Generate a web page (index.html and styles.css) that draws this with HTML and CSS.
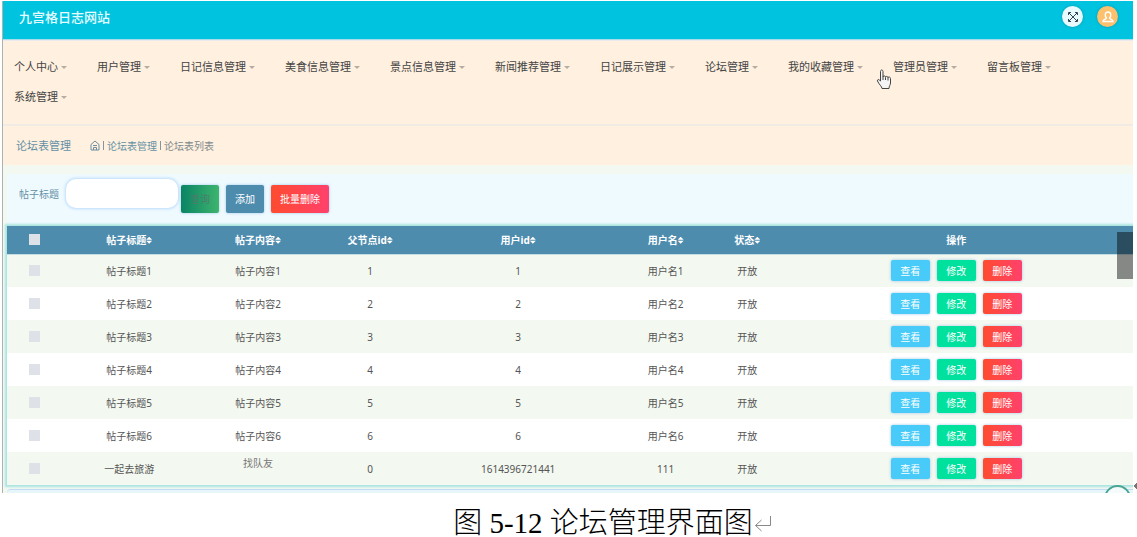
FILE: index.html
```html
<!DOCTYPE html>
<html lang="zh-CN">
<head>
    <meta charset="utf-8">
    <title>九宫格日志网站</title>
    <link rel="stylesheet" href="styles.css">
</head>
<body>
<figure class="figure">
<div class="screen">
    <header class="topbar">
        <h1>九宫格日志网站</h1>
        <div class="tools">
            <button class="round full" type="button" aria-label="全屏">
                <svg width="12" height="12" viewBox="0 0 12 12" fill="none" stroke="#345" stroke-width="1">
                    <path d="M2 2l8 8M10 2l-8 8M1.500 4V1.500H4M8 1.500h2.500V4M10.500 8v2.500H8M4 10.500H1.500V8"/>
                </svg>
            </button>
            <button class="round user" type="button" aria-label="用户">
                <svg width="14" height="14" viewBox="0 0 14 14" fill="none" stroke="#fff" stroke-width="1.400">
                    <path d="M5.500 8C3.500 6 3.800 2 7 2s3.500 4 1.500 6c.3 1.200 3.500 1 3.500 3.500H2C2 9 5.200 9.200 5.500 8z"/>
                </svg>
            </button>
        </div>
    </header>
    <nav class="menu">
        <a href="#">个人中心</a>
        <a href="#">用户管理</a>
        <a href="#">日记信息管理</a>
        <a href="#">美食信息管理</a>
        <a href="#">景点信息管理</a>
        <a href="#">新闻推荐管理</a>
        <a href="#">日记展示管理</a>
        <a href="#">论坛管理</a>
        <a href="#">我的收藏管理</a>
        <a href="#">管理员管理</a>
        <a href="#">留言板管理</a>
        <a href="#">系统管理</a>
    </nav>
    <div class="crumbs">
        <h2>论坛表管理</h2>
        <a href="#" aria-label="首页">
            <svg width="10" height="11" viewBox="0 0 10 11" fill="none" stroke="#6c8ea0" stroke-width="1">
                <path d="M1 4.500L5 1l4 3.500V10H1zM3.500 10V7.500h3V10M3 5.500h4"/>
            </svg>
        </a>
        <i></i>
        <a href="#">论坛表管理</a>
        <i></i>
        <span>论坛表列表</span>
    </div>
    <form class="search">
        <label for="title">帖子标题</label>
        <input id="title" type="text">
        <div class="buttons">
            <button class="query" type="button">查询</button>
            <button class="add" type="button">添加</button>
            <button class="del" type="button">批量删除</button>
        </div>
    </form>
    <table class="list">
        <thead>
            <tr>
                <th class="c-check"><input type="checkbox" aria-label="全选"></th>
                <th class="c-title">帖子标题<span class="sort"></span></th>
                <th class="c-content">帖子内容<span class="sort"></span></th>
                <th class="c-parent">父节点id<span class="sort"></span></th>
                <th class="c-uid">用户id<span class="sort"></span></th>
                <th class="c-name">用户名<span class="sort"></span></th>
                <th class="c-state">状态<span class="sort"></span></th>
                <th class="c-ops">操作</th>
            </tr>
        </thead>
        <tbody>
            <tr>
                <td><input type="checkbox" aria-label="选择"></td>
                <td>帖子标题1</td><td>帖子内容1</td><td>1</td><td>1</td><td>用户名1</td><td>开放</td>
                <td><div class="ops"><button class="view" type="button">查看</button><button class="edit" type="button">修改</button><button class="del" type="button">删除</button></div></td>
            </tr>
            <tr>
                <td><input type="checkbox" aria-label="选择"></td>
                <td>帖子标题2</td><td>帖子内容2</td><td>2</td><td>2</td><td>用户名2</td><td>开放</td>
                <td><div class="ops"><button class="view" type="button">查看</button><button class="edit" type="button">修改</button><button class="del" type="button">删除</button></div></td>
            </tr>
            <tr>
                <td><input type="checkbox" aria-label="选择"></td>
                <td>帖子标题3</td><td>帖子内容3</td><td>3</td><td>3</td><td>用户名3</td><td>开放</td>
                <td><div class="ops"><button class="view" type="button">查看</button><button class="edit" type="button">修改</button><button class="del" type="button">删除</button></div></td>
            </tr>
            <tr>
                <td><input type="checkbox" aria-label="选择"></td>
                <td>帖子标题4</td><td>帖子内容4</td><td>4</td><td>4</td><td>用户名4</td><td>开放</td>
                <td><div class="ops"><button class="view" type="button">查看</button><button class="edit" type="button">修改</button><button class="del" type="button">删除</button></div></td>
            </tr>
            <tr>
                <td><input type="checkbox" aria-label="选择"></td>
                <td>帖子标题5</td><td>帖子内容5</td><td>5</td><td>5</td><td>用户名5</td><td>开放</td>
                <td><div class="ops"><button class="view" type="button">查看</button><button class="edit" type="button">修改</button><button class="del" type="button">删除</button></div></td>
            </tr>
            <tr>
                <td><input type="checkbox" aria-label="选择"></td>
                <td>帖子标题6</td><td>帖子内容6</td><td>6</td><td>6</td><td>用户名6</td><td>开放</td>
                <td><div class="ops"><button class="view" type="button">查看</button><button class="edit" type="button">修改</button><button class="del" type="button">删除</button></div></td>
            </tr>
            <tr>
                <td><input type="checkbox" aria-label="选择"></td>
                <td>一起去旅游</td><td><p>找队友</p></td><td>0</td><td>1614396721441</td><td>111</td><td>开放</td>
                <td><div class="ops"><button class="view" type="button">查看</button><button class="edit" type="button">修改</button><button class="del" type="button">删除</button></div></td>
            </tr>
        </tbody>
    </table>
    <div class="paging"></div>
    <div class="thumb"></div>
    <a class="totop" href="#" aria-label="返回顶部">
        <svg width="10" height="12" viewBox="0 0 10 12" fill="none" stroke="#4aa596" stroke-width="2">
            <path d="M5 12V2M1 6l4-4 4 4"/>
        </svg>
    </a>
    <svg class="hand" width="16" height="21" viewBox="0 0 16 21" fill="#f4f4f4" stroke="#444" stroke-width="1">
        <path d="M4.500 12V2.500c0-2 2.500-2 2.500 0V8c0-1.500 2.500-1.500 2.500.300 0-1.300 2.500-1.300 2.500.500 0-1.300 2.500-1 2.500.700V14c0 2-1.500 3-1.500 5.500H6C6 17.500 3 15.500 1.500 12c-.5-1.500 1-2 2-.800z"/>
        <path d="M7 8v3M9.500 8.500V11M12 9v2.500" fill="none"/>
    </svg>
</div>
<svg class="mark" width="4" height="10" viewBox="0 0 4 10" fill="#777" stroke="#777">
    <path d="M1 5l3-3v6z" />
</svg>
<figcaption>图<span class="num"> 5-12 </span>论坛管理界面图<svg width="20" height="18" viewBox="0 0 20 18" fill="none" stroke="#888" stroke-width="1">
    <path d="M17.500 1v9.500H2.500M8.500 5l-6 5.500 6 5.500"/>
</svg></figcaption>
</figure>
</body>
</html>
```
FILE: styles.css
```css
* {
  box-sizing: border-box;
}

body {
  margin: 0;
  background: #fff;
  font-family: "Noto Sans", "Noto Sans CJK SC", sans-serif;
  font-size: 10px;
  line-height: 14px;
  color: #555;
}

h1, h2, p {
  margin: 0;
}

a {
  color: inherit;
  text-decoration: none;
}

button, input {
  margin: 0;
  padding: 0;
  border: 0;
  font: inherit;
}

.figure {
  margin: 0;
  padding: 1px 4px 0 2px;
  position: relative;
}

.screen {
  position: relative;
  overflow: hidden;
  border-left: 1px solid #a9b5ae;
  background: #f3f8f0;
}

/* top bar */
.topbar {
  display: flex;
  justify-content: space-between;
  align-items: center;
  height: 39px;
  padding: 0 15px 7px 16px;
  background: #00c4df;
  border-bottom: 1px solid #a8dce8;
}

.topbar h1 {
  font-size: 13px;
  line-height: 18px;
  font-weight: 500;
  color: #e8fbff;
}

.tools {
  display: flex;
  gap: 14px;
}

.round {
  display: flex;
  align-items: center;
  justify-content: center;
  width: 21px;
  height: 21px;
  border-radius: 50%;
  box-shadow: 0 0 3px #0a98b4;
}

.full {
  background: #e6faff;
}

.user {
  background: #fdc06c;
}

/* menu */
.menu {
  display: flex;
  flex-wrap: wrap;
  gap: 14px 30px;
  padding: 18px 11px 19px;
  background: #fff0df;
  border-top: 1px solid #e9e9ee;
  border-bottom: 2px solid #f1ebe6;
  font-size: 11px;
  line-height: 16px;
  color: #444;
}

.menu a {
  display: flex;
  align-items: center;
  gap: 3px;
}

.menu a::after {
  content: "";
  border: 3px solid transparent;
  border-top-color: #b5aca2;
  border-bottom: 0;
}

.crumbs {
  display: flex;
  align-items: center;
  gap: 3px;
  height: 39px;
  padding-left: 13px;
  background: #fff0df;
  color: #6590a5;
}

.crumbs h2 {
  margin-right: 16px;
  font-size: 11px;
  font-weight: 400;
}

.crumbs svg {
  display: block;
}

.crumbs i {
  width: 1px;
  height: 9px;
  background: #8295a0;
}

.crumbs span {
  color: #808a8c;
}

/* search form */
.search {
  display: flex;
  align-items: flex-start;
  height: 50px;
  margin: 9px 0 2px 4px;
  padding: 5px 12px;
  background: #effaff;
  color: #6590a5;
}

.search label {
  padding: 8px 7px 0 0;
}

.search input {
  width: 112px;
  height: 29px;
  padding: 0 10px;
  border-radius: 10px;
  background: #fff;
  box-shadow: 0 0 3px 1px #bcdcfa;
}

.buttons {
  display: flex;
  gap: 7px;
  padding: 6px 0 0 3px;
}

.buttons button {
  height: 28px;
  padding: 0 9px;
}

.buttons button, .ops button {
  border-radius: 2px;
  color: #fff;
  box-shadow: 0 0 3px #9cc6e6;
}

.buttons .query {
  background: linear-gradient(to right, #0a8464, #3eb46e);
  color: #4b7c6c;
}

.buttons .add {
  background: #4e8cae;
}

.buttons .del, .ops .del {
  background: linear-gradient(to right, #ff4b2f, #ff416c);
}

/* table */
.list {
  width: calc(100% - 4px);
  margin-left: 4px;
  table-layout: fixed;
  border-collapse: collapse;
  background: #fff;
  text-align: center;
  box-shadow: 0 0 2px 2px #a8e4e2;
}

.list th, .list td {
  padding: 0;
}

.list th {
  height: 28px;
  background: #4e8cae;
  border-bottom: 1px solid #c4dce2;
  font-weight: 700;
  color: #fff;
}

.list td {
  height: 33px;
}

.list tbody tr:nth-child(odd) {
  background: #f3f8f0;
}

.list p {
  margin-bottom: 12px;
  color: #777;
}

.list input {
  appearance: none;
  display: block;
  width: 11px;
  height: 11px;
  margin: 0 auto;
  background: #dfe1e8;
}

.c-check { width: 4.9%; }
.c-title { width: 11.9%; }
.c-content { width: 11%; }
.c-parent { width: 8.9%; }
.c-uid { width: 17.4%; }
.c-name { width: 8.8%; }
.c-state { width: 5.7%; }

.sort {
  display: inline-block;
  width: 6px;
  height: 7px;
  background: #fff;
  clip-path: polygon(50% 0, 100% 43%, 0 43%, 0 57%, 100% 57%, 50% 100%, 0 57%, 0 43%);
}

.ops {
  display: flex;
  justify-content: center;
  gap: 7px;
}

.ops button {
  width: 39px;
  height: 21px;
}

.ops .view {
  background: #48cbf8;
}

.ops .edit {
  background: #00e19e;
}

.paging {
  height: 4px;
  margin: 4px 0 0 4px;
  border-top: 1px solid #c0dcf4;
  border-radius: 4px 0 0 0;
  background: #e8f6fa;
}

/* things floating over the page */
.thumb {
  position: absolute;
  top: 231px;
  right: 0;
  width: 16px;
  height: 47px;
  background: rgba(0, 0, 0, .45);
}

.totop {
  position: absolute;
  right: 2px;
  bottom: -19px;
  display: flex;
  align-items: center;
  justify-content: center;
  width: 27px;
  height: 27px;
  border: 2px solid #4aa596;
  border-radius: 50%;
  background: #f4fbfa;
}

.hand {
  position: absolute;
  top: 68px;
  left: 873px;
}

.mark {
  position: absolute;
  top: 481px;
  right: 0;
}

figcaption {
  padding: 16px 0 0 91px;
  font-family: "Liberation Serif", "Noto Sans CJK SC", serif;
  font-size: 29px;
  font-weight: 300;
  line-height: 28px;
  text-align: center;
  color: #000;
}

.num {
  font-weight: 400;
}
```
